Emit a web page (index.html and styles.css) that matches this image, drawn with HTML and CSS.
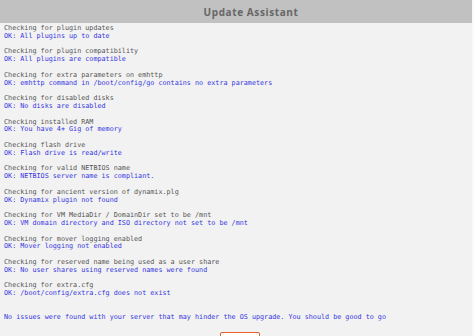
FILE: index.html
```html
<!DOCTYPE html>
<html lang="en">
<head>
  <meta charset="UTF-8">
  <title>Update Assistant</title>
  <link rel="stylesheet" href="styles.css">
</head>
<body>
  <div class="dialog">
    <header class="titlebar">
      <h1>Update Assistant</h1>
    </header>

    <main class="log">
      <div class="step">
        <div class="check">Checking for plugin updates</div>
        <div class="ok">OK: All plugins up to date</div>
      </div>
      <div class="step">
        <div class="check">Checking for plugin compatibility</div>
        <div class="ok">OK: All plugins are compatible</div>
      </div>
      <div class="step">
        <div class="check">Checking for extra parameters on emhttp</div>
        <div class="ok">OK: emhttp command in /boot/config/go contains no extra parameters</div>
      </div>
      <div class="step">
        <div class="check">Checking for disabled disks</div>
        <div class="ok">OK: No disks are disabled</div>
      </div>
      <div class="step">
        <div class="check">Checking installed RAM</div>
        <div class="ok">OK: You have 4+ Gig of memory</div>
      </div>
      <div class="step">
        <div class="check">Checking flash drive</div>
        <div class="ok">OK: Flash drive is read/write</div>
      </div>
      <div class="step">
        <div class="check">Checking for valid NETBIOS name</div>
        <div class="ok">OK: NETBIOS server name is compliant.</div>
      </div>
      <div class="step">
        <div class="check">Checking for ancient version of dynamix.plg</div>
        <div class="ok">OK: Dynamix plugin not found</div>
      </div>
      <div class="step">
        <div class="check">Checking for VM MediaDir / DomainDir set to be /mnt</div>
        <div class="ok">OK: VM domain directory and ISO directory not set to be /mnt</div>
      </div>
      <div class="step">
        <div class="check">Checking for mover logging enabled</div>
        <div class="ok">OK: Mover logging not enabled</div>
      </div>
      <div class="step">
        <div class="check">Checking for reserved name being used as a user share</div>
        <div class="ok">OK: No user shares using reserved names were found</div>
      </div>
      <div class="step">
        <div class="check">Checking for extra.cfg</div>
        <div class="ok">OK: /boot/config/extra.cfg does not exist</div>
      </div>
      <div class="summary ok">No issues were found with your server that may hinder the OS upgrade. You should be good to go</div>
    </main>

    <footer class="actions">
      <button class="done-btn">Done</button>
    </footer>
  </div>
</body>
</html>
```

FILE: styles.css
```css
html, body {
  margin: 0;
  padding: 0;
  height: 100%;
  overflow: hidden;
  background-color: #f2f2f2;
}

.dialog {
  border-right: 2px solid #fafafa;
  min-height: 100%;
  box-sizing: border-box;
}

.titlebar {
  background-color: #c1c1c1;
  height: 23px;
  display: flex;
  align-items: center;
  justify-content: center;
  padding-left: 30px;
}

.titlebar h1 {
  margin: 0;
  font-family: "Open Sans", sans-serif;
  font-size: 10px;
  font-weight: bold;
  letter-spacing: 0.6px;
  color: #666;
}

.log {
  padding: 2px 4px 0;
  font-family: "DejaVu Sans Mono", monospace;
  font-size: 6.75px;
  line-height: 7.8px;
  white-space: nowrap;
}

.step {
  margin-bottom: 7.8px;
}

.summary {
  margin-top: 16.5px;
}

.check {
  color: #555;
}

.ok {
  color: #3535e0;
}

.actions {
  display: flex;
  justify-content: center;
  padding: 10px 0 0 8px;
}

.done-btn {
  width: 40px;
  height: 20px;
  background: #fff;
  border: 1px solid #e8602c;
  border-radius: 2px;
  font-size: 7px;
  color: #e8602c;
}
```
